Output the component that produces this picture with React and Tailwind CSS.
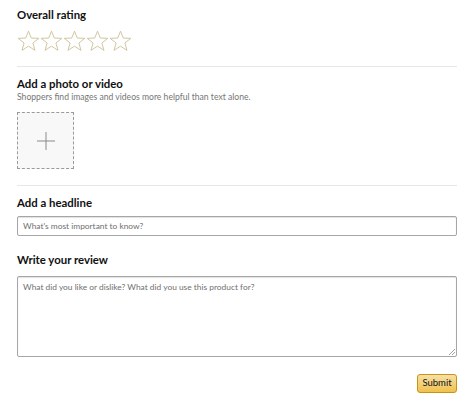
import React from "react";

function Star() {
  return (
    <svg width="23" height="22" viewBox="0 0 24 23" className="block">
      <polygon
        points="12,1.2 14.9,8.4 22.8,8.7 16.6,13.6 18.8,21.3 12,16.9 5.2,21.3 7.4,13.6 1.2,8.7 9.1,8.4"
        fill="none"
        stroke="#cfc39c"
        strokeWidth="1"
        strokeLinejoin="miter"
      />
    </svg>
  );
}

export default function App() {
  return (
    <div
      className="w-[474px] h-[412px] bg-white text-[#111] overflow-hidden"
      style={{ fontFamily: 'Lato, "Liberation Sans", sans-serif' }}
    >
      <div className="pl-[17px] w-[457px]">
        <div className="pt-[6px] text-[11.4px] leading-[18px] font-bold">Overall rating</div>
        <div className="mt-[6px] flex">
          <Star />
          <Star />
          <Star />
          <Star />
          <Star />
        </div>
        <div className="mt-[14px] border-t border-[#e7e7e7] w-[440px]" />

        <div className="mt-[8px] text-[11.4px] leading-[18px] font-bold">Add a photo or video</div>
        <div className="-mt-[2px] text-[8.6px] leading-[13px] text-[#767676]">
          Shoppers find images and videos more helpful than text alone.
        </div>
        <div className="mt-[8px] w-[57px] h-[57px] border border-dashed border-[#9a9a9a] bg-[#f8f8f8] flex items-center justify-center">
          <svg width="18" height="18" viewBox="0 0 18 18">
            <line x1="9" y1="0" x2="9" y2="18" stroke="#8a8a8a" strokeWidth="1" />
            <line x1="0" y1="9" x2="18" y2="9" stroke="#8a8a8a" strokeWidth="1" />
          </svg>
        </div>
        <div className="mt-[16px] border-t border-[#e7e7e7] w-[440px]" />

        <div className="mt-[8px] text-[11.4px] leading-[18px] font-bold">Add a headline</div>
        <div className="mt-[4px] w-[440px] h-[20px] border border-[#a6a6a6] rounded-[2px] shadow-[inset_0_1px_1px_rgba(0,0,0,0.12)] flex items-center px-[5px] text-[8.4px] text-[#6f6f6f]">
          What's most important to know?
        </div>

        <div className="mt-[15px] text-[11.4px] leading-[18px] font-bold">Write your review</div>
        <div className="relative mt-[7px] w-[440px] h-[81px] border border-[#a6a6a6] rounded-[2px] shadow-[inset_0_1px_1px_rgba(0,0,0,0.12)] px-[5px] pt-[4px] text-[8.4px] text-[#6f6f6f]">
          What did you like or dislike? What did you use this product for?
          <svg width="6" height="6" viewBox="0 0 6 6" className="absolute right-[1px] bottom-[1px]">
            <line x1="6" y1="0" x2="0" y2="6" stroke="#888" strokeWidth="0.8" />
            <line x1="6" y1="3" x2="3" y2="6" stroke="#888" strokeWidth="0.8" />
          </svg>
        </div>

        <div className="mt-[17px] flex justify-end w-[440px]">
          <div className="w-[40px] h-[19px] rounded-[3px] border border-[#c89411] bg-gradient-to-b from-[#f7dfa5] to-[#f0c14b] flex items-center justify-center text-[9.5px] text-[#111]">
            Submit
          </div>
        </div>
      </div>
    </div>
  );
}
